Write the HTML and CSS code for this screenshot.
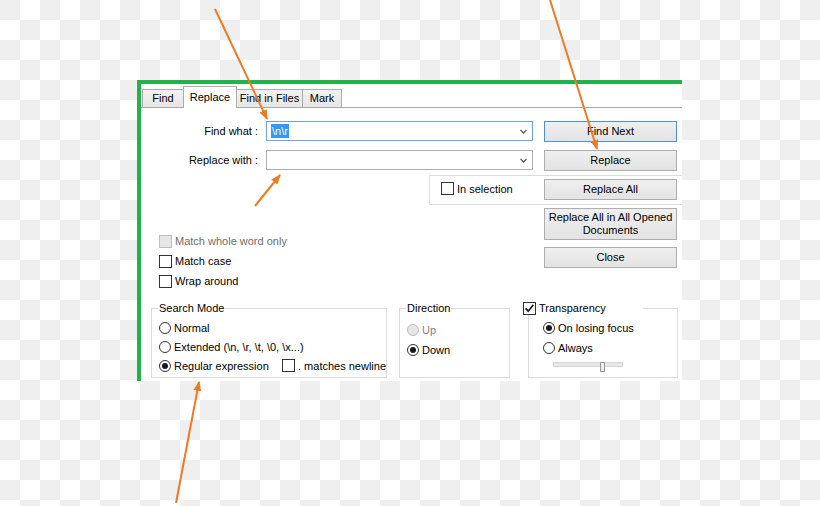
FILE: index.html
```html
<!DOCTYPE html>
<html>
<head>
<meta charset="utf-8">
<link rel="stylesheet" href="styles.css">
</head>
<body>
<div class="page">
  <div class="dialog">
    <div class="tabs">
      <div class="tab t-find">Find</div>
      <div class="tab t-replace active">Replace</div>
      <div class="tab t-files">Find in Files</div>
      <div class="tab t-mark">Mark</div>
    </div>
    <div class="panel">
      <div class="row">
        <div class="lbl">Find what :</div>
        <div class="combo focus"><span class="seltext">\n\r</span><svg class="chev" width="7" height="5" viewBox="0 0 7 5"><path d="M0.5 0.8 L3.5 4 L6.5 0.8" fill="none" stroke="#555" stroke-width="1.2"/></svg></div>
        <div class="btn default">Find Next</div>
      </div>
      <div class="row row2">
        <div class="lbl">Replace with :</div>
        <div class="combo"><span class="seltext empty"></span><svg class="chev" width="7" height="5" viewBox="0 0 7 5"><path d="M0.5 0.8 L3.5 4 L6.5 0.8" fill="none" stroke="#555" stroke-width="1.2"/></svg></div>
        <div class="btn">Replace</div>
      </div>
      <div class="selbox">
        <div class="chk insel"><span class="box"></span>In selection</div>
        <div class="btn">Replace All</div>
      </div>
      <div class="lower">
        <div class="checks">
          <div class="chk disabled"><span class="box"></span>Match whole word only</div>
          <div class="chk"><span class="box"></span>Match case</div>
          <div class="chk"><span class="box"></span>Wrap around</div>
        </div>
        <div class="btncol">
          <div class="btn tall">Replace All in All Opened<br>Documents</div>
          <div class="btn closebtn">Close</div>
        </div>
      </div>
      <div class="groups">
        <fieldset class="grp g-mode">
          <legend>Search Mode</legend>
          <div class="opt"><span class="radio"></span>Normal</div>
          <div class="opt"><span class="radio"></span>Extended (\n, \r, \t, \0, \x...)</div>
          <div class="opt"><span class="regex"><span class="radio on"></span>Regular expression</span><span class="box"></span>. matches newline</div>
        </fieldset>
        <fieldset class="grp g-dir">
          <legend>Direction</legend>
          <div class="opt tall-opt disabled"><span class="radio"></span>Up</div>
          <div class="opt tall-opt"><span class="radio on"></span>Down</div>
        </fieldset>
        <fieldset class="grp g-trans">
          <legend><span class="leg-in"><span class="box checked"><svg width="11" height="11" viewBox="0 0 11 11"><path d="M1.6 5.4 L4.2 8.2 L9.4 1.8" fill="none" stroke="#1a1a1a" stroke-width="1.7"/></svg></span>Transparency</span></legend>
          <div class="opt tall-opt"><span class="radio on"></span>On losing focus</div>
          <div class="opt tall-opt"><span class="radio"></span>Always</div>
          <div class="slider"><div class="track"></div><div class="thumb"></div></div>
        </fieldset>
      </div>
    </div>
  </div>
  <svg class="arrows" width="820" height="506" viewBox="0 0 820 506">
    <defs>
      <marker id="ah" markerWidth="10" markerHeight="8" refX="9" refY="4" orient="auto" markerUnits="userSpaceOnUse">
        <path d="M0,0 L10,4 L0,8 z" fill="#f07a22"/>
      </marker>
    </defs>
    <line x1="215" y1="9" x2="267" y2="119" stroke="#f07a22" stroke-width="2" marker-end="url(#ah)"/>
    <line x1="550" y1="0" x2="597" y2="149" stroke="#f07a22" stroke-width="2" marker-end="url(#ah)"/>
    <line x1="255" y1="206" x2="280" y2="175" stroke="#f07a22" stroke-width="2" marker-end="url(#ah)"/>
    <line x1="176" y1="503" x2="199" y2="382" stroke="#f07a22" stroke-width="2" marker-end="url(#ah)"/>
  </svg>
</div>
</body>
</html>
```

FILE: styles.css
```css
html, body {
  margin: 0;
  padding: 0;
}
body {
  width: 820px;
  height: 506px;
  overflow: hidden;
  background-color: #fff;
  background-image: conic-gradient(#fff 0 25%, #efefef 0 50%, #fff 0 75%, #efefef 0);
  background-size: 40px 40px;
  font-family: "Liberation Sans", Arial, sans-serif;
  font-size: 11px;
  color: #000;
}
.page {
  position: relative;
  width: 820px;
  height: 506px;
  padding-top: 80px;
  box-sizing: border-box;
}
.dialog {
  margin-left: 137px;
  width: 545px;
  height: 301px;
  box-sizing: border-box;
  background: #fff;
  border-top: 4px solid #22b24c;
  border-left: 4px solid #22b24c;
}
.tabs {
  display: flex;
  align-items: flex-end;
  height: 23px;
  border-bottom: 1px solid #a9a9a9;
  padding-left: 1px;
}
.tab {
  box-sizing: border-box;
  height: 18px;
  border: 1px solid #acacac;
  border-bottom: none;
  background: linear-gradient(#f2f2f2, #e6e6e6);
  text-align: center;
  line-height: 17px;
  margin-left: -1px;
}
.tab.active {
  height: 22px;
  margin-bottom: -1px;
  background: #fff;
  line-height: 20px;
  position: relative;
}
.t-find { width: 42px; margin-left: 0; }
.t-replace { width: 54px; }
.t-files { width: 67px; }
.t-mark { width: 40px; }

.panel {
  padding-top: 13px;
}
.row {
  display: flex;
  align-items: flex-start;
  height: 21px;
}
.row2 { margin-top: 8px; }
.lbl {
  width: 117px;
  text-align: right;
  line-height: 20px;
}
.combo {
  box-sizing: border-box;
  margin-left: 8px;
  width: 267px;
  height: 20px;
  border: 1px solid #abadb3;
  background: #fff;
  display: flex;
  align-items: center;
  padding-left: 4px;
}
.combo.focus { border-color: #6aa5e2; }
.seltext {
  background: #3399ff;
  color: #fff;
  padding: 0 1px;
  line-height: 14px;
  flex: none;
}
.seltext.empty { background: none; padding: 0; }
.chev {
  margin-left: auto;
  margin-right: 5px;
}
.btn {
  box-sizing: border-box;
  width: 133px;
  height: 21px;
  border: 1px solid #adadad;
  background: linear-gradient(#efefef, #e3e3e3);
  text-align: center;
  line-height: 19px;
  flex: none;
}
.row .btn { margin-left: 11px; }
.btn.default { border-color: #4d90d6; }

.selbox {
  margin-top: 4px;
  margin-left: 288px;
  width: 253px;
  height: 30px;
  box-sizing: border-box;
  border: 1px solid #dcdcdc;
  border-right: none;
  padding: 3px 0 0 11px;
  display: flex;
  align-items: flex-start;
}
.chk {
  display: flex;
  align-items: center;
  height: 20px;
}
.chk.insel { width: 103px; height: 21px; margin-top: -1px; }
.box {
  box-sizing: border-box;
  width: 13px;
  height: 13px;
  border: 1px solid #333;
  background: #fff;
  margin-right: 3px;
  flex: none;
  display: flex;
  align-items: center;
  justify-content: center;
}
.chk.disabled { color: #6d6d6d; }
.chk.disabled .box { border-color: #bcbcbc; background: #e6e6e6; }

.lower {
  display: flex;
  height: 86px;
}
.checks {
  width: 403px;
  box-sizing: border-box;
  padding: 26px 0 0 18px;
}
.btncol {
  padding-top: 3px;
}
.btn.tall {
  height: 32px;
  line-height: 13px;
  padding-top: 2px;
}
.btn.closebtn { margin-top: 7px; }

.groups {
  display: flex;
  margin-top: 11px;
  padding-left: 10px;
}
.grp {
  margin: 0;
  border: 1px solid #dcdcdc;
  padding: 3px 7px 2px;
  min-width: 0;
  box-sizing: border-box;
}
.grp legend {
  padding: 0 1px;
  margin-left: -1px;
  line-height: 13px;
  font-size: 11px;
}
.g-mode { width: 236px; }
.g-dir { width: 111px; margin-left: 12px; padding-top: 5px; }
.g-trans { width: 150px; margin-left: 18px; padding-left: 14px; }
.g-trans legend {
  margin-left: -22px;
  width: 122px;
  padding: 0 0 0 2px;
  background: #fff;
  box-sizing: border-box;
}
.leg-in {
  display: flex;
  align-items: center;
  height: 13px;
}
.opt {
  display: flex;
  align-items: center;
  height: 19px;
  white-space: nowrap;
}
.opt.tall-opt { height: 20px; }
.opt.disabled { color: #838383; }
.radio {
  box-sizing: border-box;
  width: 12px;
  height: 12px;
  border: 1px solid #333;
  border-radius: 50%;
  background: #fff;
  margin-right: 3px;
  flex: none;
  display: flex;
  align-items: center;
  justify-content: center;
}
.radio.on::after {
  content: "";
  width: 6px;
  height: 6px;
  border-radius: 50%;
  background: #1a1a1a;
}
.opt.disabled .radio { border-color: #bcbcbc; background: #e6e6e6; }
.regex {
  display: flex;
  align-items: center;
  width: 123px;
  flex: none;
}
.slider {
  position: relative;
  width: 70px;
  height: 10px;
  margin: 1px 0 0 10px;
}
.track {
  margin-top: 4px;
  height: 3px;
  border: 1px solid #d6d6d6;
  background: #e7e7e7;
}
.thumb {
  position: absolute;
  left: 47px;
  top: 0;
  width: 5px;
  height: 10px;
  box-sizing: border-box;
  border: 1px solid #9a9a9a;
  background: #ececec;
}
.arrows {
  position: absolute;
  left: 0;
  top: 0;
  pointer-events: none;
}
```
